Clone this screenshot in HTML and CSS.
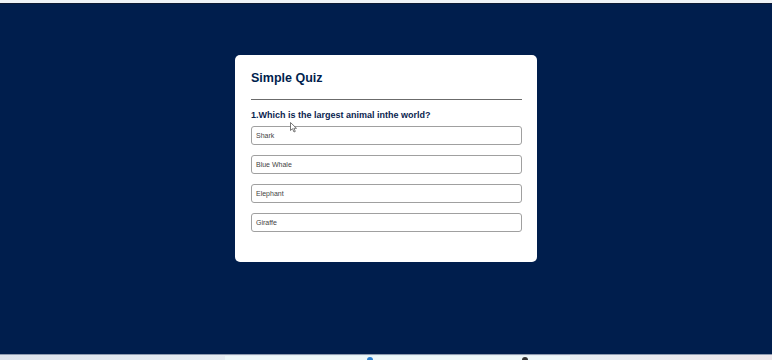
FILE: index.html
```html
<!DOCTYPE html>
<html lang="en">
<head>
<meta charset="utf-8">
<title>Simple Quiz</title>
<link rel="stylesheet" href="styles.css">
</head>
<body>
<div class="topstrip"></div>
<main class="stage">
  <div class="app">
    <h1 class="title">Simple Quiz</h1>
    <div class="quiz">
      <h2 class="question">1.Which is the largest animal inthe world?</h2>
      <div class="answers">
        <button class="btn">Shark</button>
        <button class="btn">Blue Whale</button>
        <button class="btn">Elephant</button>
        <button class="btn">Giraffe</button>
      </div>
    </div>
    <svg class="cursor" width="8" height="11" viewBox="0 0 8 11"><path d="M0.5 0.5 L0.5 8.5 L2.5 6.7 L4 10 L5.3 9.4 L3.9 6.3 L6.5 6.3 Z" fill="#fff" stroke="#555" stroke-width="0.8"/></svg>
  </div>
</main>
<div class="taskbar">
  <span class="tb-seg"></span>
  <span class="tb-dot tb-blue"></span>
  <span class="tb-dot tb-dark"></span>
</div>
</body>
</html>
```
FILE: styles.css
```css
* { margin: 0; padding: 0; box-sizing: border-box; }
html, body { height: 100%; }
body {
  font-family: "Liberation Sans", Arial, sans-serif;
  background: #001e4d;
  display: flex;
  flex-direction: column;
  height: 360px;
  overflow: hidden;
}
.topstrip {
  height: 4px;
  background: #eef3f7;
  border-bottom: 1px solid #0d1a33;
}
.stage {
  flex: 1;
  display: flex;
  justify-content: center;
  align-items: flex-start;
}
.app {
  position: relative;
  margin-top: 51px;
  width: 302px;
  background: #fff;
  border-radius: 5px;
  padding: 15px 15px 15px 16px;
}
.title {
  font-size: 12.5px;
  font-weight: 700;
  color: #001e4d;
  line-height: 16px;
  padding-bottom: 13px;
  border-bottom: 1px solid #6b6b6b;
}
.quiz { padding: 10px 0; }
.question {
  font-size: 9px;
  font-weight: 700;
  color: #0a2450;
  line-height: 10px;
}
.answers {
  display: flex;
  flex-direction: column;
  gap: 10px;
  padding: 6px 0 5px;
}
.btn {
  display: block;
  width: 100%;
  text-align: left;
  background: #fff;
  color: #444;
  font-family: "Liberation Sans", Arial, sans-serif;
  font-size: 7px;
  line-height: 8px;
  padding: 4.5px 4px;
  border: 1px solid #a0a0a0;
  border-radius: 3px;
}
.cursor {
  position: absolute;
  left: 55px;
  top: 67px;
}
.taskbar {
  position: relative;
  height: 6px;
  background: linear-gradient(90deg, #dde3ec 0%, #e6edf3 30%, #e2f3f6 50%, #e6eef4 70%, #ece6ea 100%);
  border-top: 1px solid #8e9bb0;
}
.tb-seg {
  position: absolute;
  left: 225px;
  top: 1px;
  width: 345px;
  height: 5px;
  background: #eef8fa;
}
.tb-dot {
  position: absolute;
  top: 2px;
  width: 6px;
  height: 6px;
  border-radius: 50%;
}
.tb-blue { left: 367px; background: #2a7fd0; }
.tb-dark { left: 522px; background: #333; }
```
